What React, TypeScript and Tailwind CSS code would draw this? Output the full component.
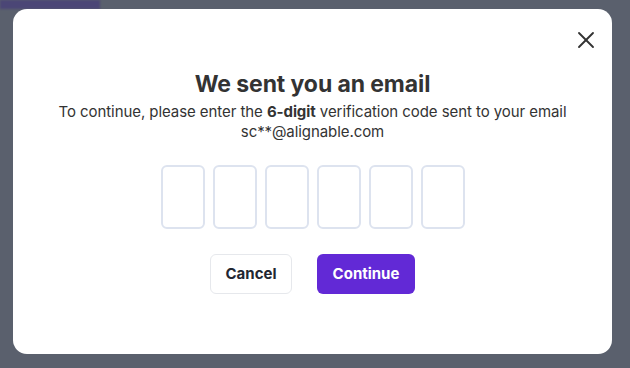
import React from 'react';
import { X } from 'lucide-react';

export default function App() {
  const digits = [0, 1, 2, 3, 4, 5];

  return (
    <div className="relative w-[630px] h-[368px] overflow-hidden bg-[#5a606d] pl-[13px] pt-[9px] font-['Inter',sans-serif]">
      {/* faint page behind the overlay */}
      <div className="absolute left-0 top-0 w-[100px] h-[9px] bg-[#4b4676] blur-[1px]" />

      <div className="relative w-[599px] h-[345px] rounded-[14px] bg-white flex flex-col items-center pt-[61px]">
        <button className="absolute right-[12px] top-[17px] text-[#333333]">
          <X className="w-[28px] h-[28px]" strokeWidth={1.6} />
        </button>

        <h2 className="text-[23px] leading-[28px] font-bold text-[#333333] tracking-[-0.1px]">We sent you an email</h2>
        <p className="mt-[4px] text-[15px] leading-[20px] text-[#333333] text-center tracking-[-0.07px]">
          To continue, please enter the <span className="font-bold">6-digit</span> verification code sent to your email
          <br />
          sc**@alignable.com
        </p>

        <div className="mt-[23px] flex gap-[8px]">
          {digits.map((d) => (
            <input
              key={d}
              maxLength={1}
              className="w-[44px] h-[64px] rounded-[6px] border-2 border-[#dde3ef] bg-white text-center text-xl outline-none"
            />
          ))}
        </div>

        <div className="mt-[25px] flex gap-[25px]">
          <button className="w-[82px] h-[40px] rounded-[6px] border border-[#e6e8ec] bg-white text-[15px] font-bold text-[#222631]">
            Cancel
          </button>
          <button className="w-[98px] h-[40px] rounded-[6px] bg-[#6229d6] text-[15px] font-bold text-white">
            Continue
          </button>
        </div>
      </div>
    </div>
  );
}
